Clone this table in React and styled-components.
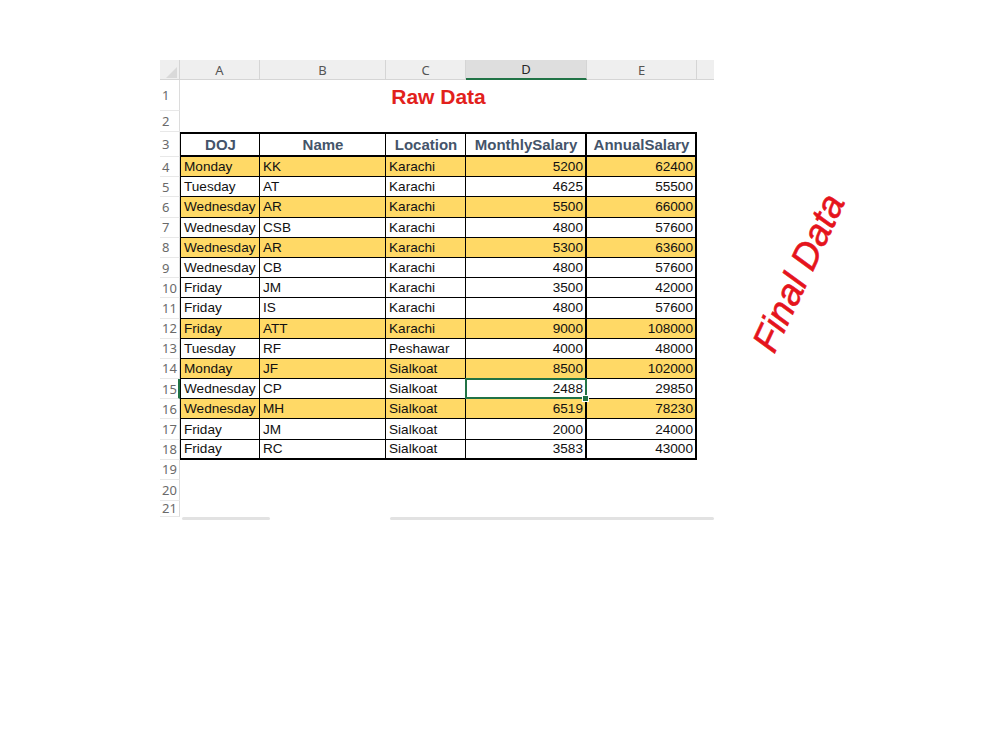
import React from "react";
import styled, { createGlobalStyle, css } from "styled-components";

const Global = createGlobalStyle`
  html, body { margin: 0; padding: 0; background: #ffffff; }
  body { font-family: "Liberation Sans", Arial, sans-serif; }
`;

const COLS = "20px 80px 126px 80px 121px 110px 17px";

const Page = styled.div`
  position: relative;
  width: 1000px;
  height: 750px;
  padding: 60px 0 0 160px;
  box-sizing: border-box;
`;

const Sheet = styled.div`
  display: flex;
  flex-direction: column;
  width: 554px;
`;

const Row = styled.div`
  display: grid;
  grid-template-columns: ${COLS};
  height: ${(p) => p.$h}px;
`;

const ColHeadBar = styled(Row)`
  background: #efefef;
  border-bottom: 1px solid #d5d5d5;
  box-sizing: border-box;
`;

const Corner = styled.div`
  position: relative;
  border-right: 1px solid #d5d5d5;
  &::after {
    content: "";
    position: absolute;
    right: 2px;
    bottom: 2px;
    width: 0;
    height: 0;
    border-left: 11px solid transparent;
    border-bottom: 11px solid #d9d9d9;
  }
`;

const ColHead = styled.div`
  display: flex;
  align-items: center;
  justify-content: center;
  font-family: "Noto Sans", "Open Sans", sans-serif;
  font-size: 13px;
  color: #555;
  border-right: 1px solid #d5d5d5;
  box-sizing: border-box;
  ${(p) =>
    p.$sel &&
    css`
      background: #dedede;
      border-bottom: 2px solid #217346;
      color: #262626;
    `}
`;

const RowHead = styled.div`
  display: flex;
  align-items: center;
  padding-left: 2px;
  font-family: "Noto Sans", "Open Sans", sans-serif;
  font-size: 13px;
  color: #6a6a6a;
  border-bottom: 1px solid #e8e8e8;
  border-right: ${(p) => (p.$sel ? "2px solid #217346" : "1px solid #dcdcdc")};
  box-sizing: border-box;
  overflow: hidden;
  white-space: nowrap;
`;

const Blank = styled.div``;

const Title = styled.div`
  grid-column: 2 / 7;
  display: flex;
  align-items: flex-end;
  justify-content: center;
  padding-bottom: 2px;
  font-size: 21px;
  font-weight: bold;
  color: #e2211c;
`;

const Cell = styled.div`
  position: relative;
  display: flex;
  align-items: center;
  justify-content: ${(p) => (p.$num ? "flex-end" : p.$head ? "center" : "flex-start")};
  padding: 0 2px 0 ${(p) => (p.$num ? "0" : "3px")};
  box-sizing: border-box;
  font-size: ${(p) => (p.$head ? "15px" : "13.6px")};
  font-weight: ${(p) => (p.$head ? "bold" : "normal")};
  color: ${(p) => (p.$head ? "#44546a" : "#111")};
  background: ${(p) => (p.$hl ? "#ffd966" : "#ffffff")};
  white-space: nowrap;
  border-right: ${(p) => (p.$thickR ? 2 : 1)}px solid #000;
  border-bottom: ${(p) => (p.$thickB ? 2 : 1)}px solid #000;
  ${(p) => p.$first && css`border-left: 1px solid #000;`}
  ${(p) => p.$thickT && css`border-top: 2px solid #000;`}
  ${(p) =>
    p.$sel &&
    css`
      &::after {
        content: "";
        position: absolute;
        left: -1px;
        top: -1px;
        right: -2px;
        bottom: -1px;
        border: 2px solid #217346;
        pointer-events: none;
      }
      &::before {
        content: "";
        position: absolute;
        right: -4px;
        bottom: -4px;
        width: 5px;
        height: 5px;
        background: #217346;
        border: 1px solid #fff;
        z-index: 2;
      }
    `}
`;

const ScrollRow = styled.div`
  display: flex;
  height: 4px;
  padding-left: 22px;
  gap: 120px;
`;

const ScrollSeg = styled.div`
  width: ${(p) => p.$w}px;
  height: 3px;
  background: #e2e2e2;
  border-radius: 2px;
`;

const FinalData = styled.div`
  position: absolute;
  left: 799px;
  top: 273px;
  transform: translate(-50%, -50%) rotate(-65deg);
  font-family: "Liberation Sans", Arial, sans-serif;
  font-style: italic;
  font-size: 37px;
  color: #e5141c;
  -webkit-text-stroke: 0.6px #e5141c;
  white-space: nowrap;
`;

const data = [
  ["Monday", "KK", "Karachi", 5200, 62400, true],
  ["Tuesday", "AT", "Karachi", 4625, 55500, false],
  ["Wednesday", "AR", "Karachi", 5500, 66000, true],
  ["Wednesday", "CSB", "Karachi", 4800, 57600, false],
  ["Wednesday", "AR", "Karachi", 5300, 63600, true],
  ["Wednesday", "CB", "Karachi", 4800, 57600, false],
  ["Friday", "JM", "Karachi", 3500, 42000, false],
  ["Friday", "IS", "Karachi", 4800, 57600, false],
  ["Friday", "ATT", "Karachi", 9000, 108000, true],
  ["Tuesday", "RF", "Peshawar", 4000, 48000, false],
  ["Monday", "JF", "Sialkoat", 8500, 102000, true],
  ["Wednesday", "CP", "Sialkoat", 2488, 29850, false],
  ["Wednesday", "MH", "Sialkoat", 6519, 78230, true],
  ["Friday", "JM", "Sialkoat", 2000, 24000, false],
  ["Friday", "RC", "Sialkoat", 3583, 43000, false],
];

const headers = ["DOJ", "Name", "Location", "MonthlySalary", "AnnualSalary"];

export default function App() {
  return (
    <>
      <Global />
      <Page>
        <Sheet>
          <ColHeadBar $h={20}>
            <Corner />
            {["A", "B", "C", "D", "E"].map((l) => (
              <ColHead key={l} $sel={l === "D"}>
                {l}
              </ColHead>
            ))}
            <Blank />
          </ColHeadBar>

          <Row $h={31}>
            <RowHead>1</RowHead>
            <Title>Raw Data</Title>
            <Blank />
          </Row>

          <Row $h={21}>
            <RowHead>2</RowHead>
            <Blank />
            <Blank />
            <Blank />
            <Blank />
            <Blank />
            <Blank />
          </Row>

          <Row $h={25}>
            <RowHead>3</RowHead>
            {headers.map((h, i) => (
              <Cell key={h} $head $thickT $thickB $first={i === 0} $thickR={i >= 3}>
                {h}
              </Cell>
            ))}
            <Blank />
          </Row>

          {data.map((r, idx) => {
            const rowNum = idx + 4;
            const last = idx === data.length - 1;
            const sel = rowNum === 15;
            return (
              <Row key={rowNum} $h={20.2}>
                <RowHead $sel={sel}>{rowNum}</RowHead>
                <Cell $first $hl={r[5]} $thickB={last}>{r[0]}</Cell>
                <Cell $hl={r[5]} $thickB={last}>{r[1]}</Cell>
                <Cell $hl={r[5]} $thickB={last}>{r[2]}</Cell>
                <Cell $num $hl={r[5]} $thickB={last} $thickR $sel={sel}>{r[3]}</Cell>
                <Cell $num $hl={r[5]} $thickB={last} $thickR>{r[4]}</Cell>
                <Blank />
              </Row>
            );
          })}

          {[
            [19, 20],
            [20, 21],
            [21, 16],
          ].map(([n, h]) => (
            <Row key={n} $h={h}>
              <RowHead>{n}</RowHead>
              <Blank />
              <Blank />
              <Blank />
              <Blank />
              <Blank />
              <Blank />
            </Row>
          ))}

          <ScrollRow>
            <ScrollSeg $w={88} />
            <ScrollSeg $w={324} />
          </ScrollRow>
        </Sheet>

        <FinalData>Final Data</FinalData>
      </Page>
    </>
  );
}
